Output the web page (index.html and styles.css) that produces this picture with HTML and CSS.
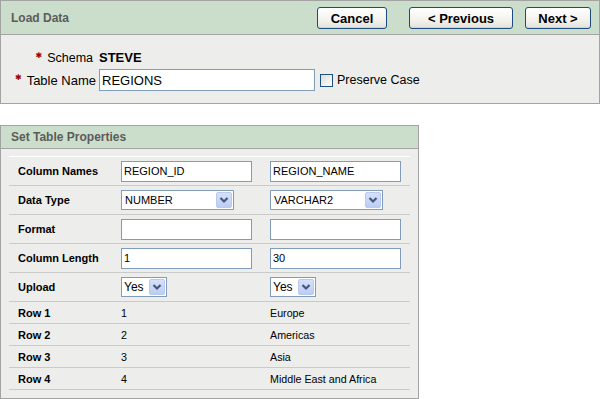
FILE: index.html
```html
<!DOCTYPE html>
<html>
<head>
<meta charset="utf-8">
<title>Load Data</title>
<link rel="stylesheet" href="styles.css">
</head>
<body>
<div class="panel panel-load">
  <div class="panel-head head-load">
    <h2 class="panel-title">Load Data</h2>
    <div class="buttons">
      <button class="btn btn-cancel">Cancel</button>
      <button class="btn btn-prev">&lt; Previous</button>
      <button class="btn btn-next">Next &gt;</button>
    </div>
  </div>
  <div class="panel-body form">
    <div class="form-label label-schema"><span class="req">✱</span>Schema</div>
    <div class="form-value"><span class="schema-name">STEVE</span></div>
    <div class="form-label label-table"><span class="req">✱</span>Table Name</div>
    <div class="form-value">
      <input class="text text-table" type="text" value="REGIONS">
      <label class="check"><span class="checkbox"></span>Preserve Case</label>
    </div>
  </div>
</div>

<div class="panel panel-props">
  <div class="panel-head head-props">
    <h2 class="panel-title">Set Table Properties</h2>
  </div>
  <div class="panel-body props-body">
    <table class="props">
      <tr class="row-input">
        <th>Column Names</th>
        <td><input class="text cell-input" type="text" value="REGION_ID"></td>
        <td><input class="text cell-input" type="text" value="REGION_NAME"></td>
      </tr>
      <tr class="row-input">
        <th>Data Type</th>
        <td><span class="select select-wide"><span class="select-text">NUMBER</span><span class="select-btn"><svg width="16" height="16" viewBox="0 0 16 16"><polyline points="4.5,6 8,9.5 11.5,6" fill="none" stroke="#45577a" stroke-width="2.2"/></svg></span></span></td>
        <td><span class="select select-wide"><span class="select-text">VARCHAR2</span><span class="select-btn"><svg width="16" height="16" viewBox="0 0 16 16"><polyline points="4.5,6 8,9.5 11.5,6" fill="none" stroke="#45577a" stroke-width="2.2"/></svg></span></span></td>
      </tr>
      <tr class="row-input">
        <th>Format</th>
        <td><input class="text cell-input" type="text" value=""></td>
        <td><input class="text cell-input" type="text" value=""></td>
      </tr>
      <tr class="row-input">
        <th>Column Length</th>
        <td><input class="text cell-input" type="text" value="1"></td>
        <td><input class="text cell-input" type="text" value="30"></td>
      </tr>
      <tr class="row-input">
        <th>Upload</th>
        <td><span class="select select-small"><span class="select-text">Yes</span><span class="select-btn"><svg width="16" height="16" viewBox="0 0 16 16"><polyline points="4.5,6 8,9.5 11.5,6" fill="none" stroke="#45577a" stroke-width="2.2"/></svg></span></span></td>
        <td><span class="select select-small"><span class="select-text">Yes</span><span class="select-btn"><svg width="16" height="16" viewBox="0 0 16 16"><polyline points="4.5,6 8,9.5 11.5,6" fill="none" stroke="#45577a" stroke-width="2.2"/></svg></span></span></td>
      </tr>
      <tr class="row-data"><th>Row 1</th><td>1</td><td>Europe</td></tr>
      <tr class="row-data"><th>Row 2</th><td>2</td><td>Americas</td></tr>
      <tr class="row-data"><th>Row 3</th><td>3</td><td>Asia</td></tr>
      <tr class="row-data"><th>Row 4</th><td>4</td><td>Middle East and Africa</td></tr>
    </table>
  </div>
</div>
</body>
</html>
```

FILE: styles.css
```css
* { box-sizing: border-box; }
html, body { margin: 0; padding: 0; background: #ffffff; }
body {
  font-family: "Liberation Sans", Arial, sans-serif;
  font-size: 12px;
  color: #000;
}

.panel {
  border: 1px solid #a3a3a3;
  background: #ededeb;
}
.panel-load { width: 600px; height: 104px; margin-bottom: 21px; }
.panel-props { width: 419px; height: 274px; }

.panel-head {
  background: #cbdecb;
  border-bottom: 1px solid #a3a3a3;
  display: flex;
  align-items: center;
  padding-left: 10px;
}
.head-load { height: 34px; }
.head-props { height: 23px; }

.panel-title {
  margin: 0;
  font-size: 12px;
  font-weight: bold;
  color: #5b5b5b;
}

.buttons {
  margin-left: auto;
  display: flex;
  gap: 12px;
  padding-right: 8px;
  padding-top: 1px;
}
.btn {
  height: 22px;
  border: 1px solid #1d4b7e;
  border-radius: 3px;
  background: linear-gradient(#ffffff, #f3f2ee 60%, #e4e2da);
  font-family: "Liberation Sans", Arial, sans-serif;
  font-size: 13px;
  font-weight: bold;
  color: #000;
  padding: 0;
  box-shadow: inset 0 -1px 0 #d6d3c8;
}
.btn-cancel { width: 70px; margin-right: 10px; }
.btn-prev { width: 104px; }
.btn-next { width: 66px; }

.form {
  display: grid;
  grid-template-columns: 96px auto;
  column-gap: 2px;
  row-gap: 1px;
  grid-auto-rows: 22px;
  padding-top: 11px;
}
.form-label {
  display: flex;
  align-items: center;
  justify-content: flex-end;
  font-size: 12.5px;
  white-space: nowrap;
}
.label-schema { padding-right: 4px; padding-top: 1px; }
.label-table { font-size: 13px; padding-right: 1px; }
.req {
  font-family: "DejaVu Sans", sans-serif;
  color: #a00000;
  font-size: 8px;
  margin-right: 5px;
  align-self: flex-start;
  margin-top: 4px;
}
.form-value { display: flex; align-items: center; }
.schema-name { font-weight: bold; font-size: 13px; padding-top: 1px; }

.text {
  border: 1px solid #7f9db9;
  background: #fff;
  font-family: "Liberation Sans", Arial, sans-serif;
  color: #000;
  padding: 0 0 0 2px;
  margin: 0;
  outline: none;
}
.text-table { width: 216px; height: 22px; font-size: 13px; }

.check {
  display: flex;
  align-items: center;
  margin-left: 5px;
  font-size: 12.5px;
}
.checkbox {
  width: 13px;
  height: 13px;
  border: 1px solid #1c5180;
  background: linear-gradient(135deg, #dcdcd6, #ffffff);
  margin-right: 4px;
}

.props-body { padding: 7px 8px 0 8px; }
.props {
  width: 401px;
  border-collapse: collapse;
  border-top: 1px solid #ffffff;
}
.props th, .props td {
  border-bottom: 1px solid #cacaca;
  padding: 0;
  text-align: left;
  vertical-align: middle;
}
.props th {
  width: 112px;
  padding-left: 9px;
  font-size: 11px;
  font-weight: bold;
}
.props td:nth-child(2) { width: 149px; }
.props td { font-size: 10.7px; }
.row-input th, .row-input td { height: 29px; }
.row-data th, .row-data td { height: 22px; }

.cell-input { width: 131px; height: 21px; font-size: 11px; display: block; }

.select {
  position: relative;
  display: flex;
  align-items: center;
  height: 20px;
  border: 1px solid #7f9db9;
  background: #fff;
  font-size: 11px;
}
.select-wide { width: 113px; }
.select-small { width: 46px; }
.select-text { padding-left: 3px; }
.select-btn {
  position: absolute;
  right: 1px;
  top: 1px;
  width: 16px;
  height: 16px;
  border: 1px solid #b9c9ef;
  border-radius: 2px;
  background: linear-gradient(#d5e1fb, #bccdf4);
}
.select-btn svg { display: block; margin: -1px 0 0 -1px; }
.select-small .select-text { font-size: 12px; padding-left: 2px; }
```
